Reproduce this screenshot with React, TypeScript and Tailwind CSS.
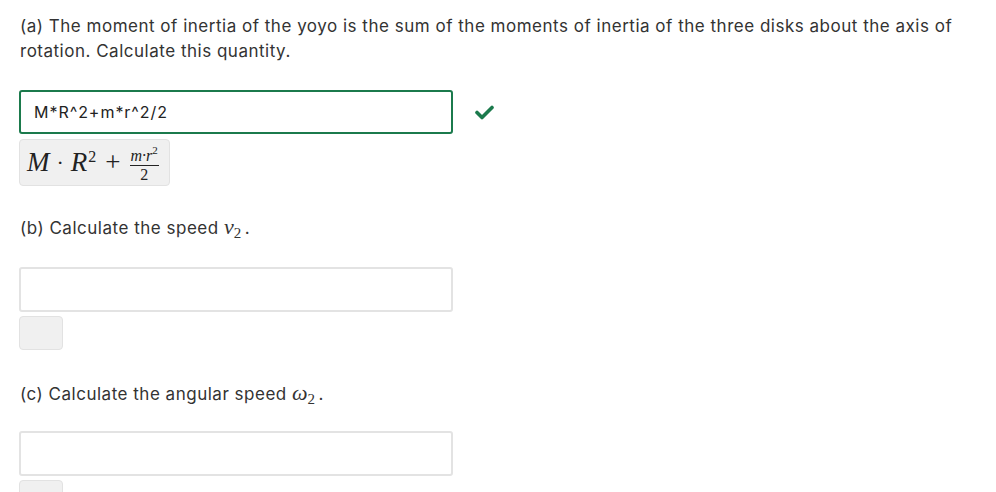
import React from 'react';

const serif = "font-['Liberation_Serif','DejaVu_Serif',serif]";

const AnswerBox = ({ value, correct }: { value?: string; correct?: boolean }) => (
  <div className="flex items-center">
    <div
      className={
        correct
          ? 'w-[434px] h-[44px] rounded-[3px] border-2 border-[#1b7a4c] flex items-center px-[13px] text-[16px] tracking-[0.06em] text-[#222]'
          : 'w-[434px] h-[45px] rounded-[3px] border-2 border-[#e3e3e3] flex items-center px-[13px] text-[16px] text-[#222]'
      }
    >
      {value}
    </div>
    {correct && (
      <svg className="ml-[22px]" width="19" height="15" viewBox="0 0 19 15">
        <path d="M2 7.5 L7 12.5 L17 2.5" fill="none" stroke="#1b7a4c" strokeWidth="3.6" strokeLinecap="round" strokeLinejoin="round" />
      </svg>
    )}
  </div>
);

export default function App() {
  return (
    <div className="font-['Inter',sans-serif] text-[#333] pl-[19px] pr-[20px] pt-[14px] w-[996px] h-[492px] overflow-hidden bg-white">
      <p className="text-[17px] leading-[25px] tracking-[0.03em] pl-[1px]">
        (a) The moment of inertia of the yoyo is the sum of the moments of inertia of the three disks about the axis of
        rotation. Calculate this quantity.
      </p>

      <div className="mt-[26px]">
        <AnswerBox value="M*R^2+m*r^2/2" correct />
        <div className="mt-[5px] w-[151px] h-[47px] rounded-[4px] border border-[#e2e2e2] bg-[#f0f0f0] flex items-center pl-[7px] text-[#222] leading-none">
          <span className={`${serif} text-[27px] italic`}>M</span>
          <span className={`${serif} text-[22px] mx-[7px]`}>·</span>
          <span className={`${serif} text-[27px] italic`}>R</span>
          <span className={`${serif} text-[16px] self-start mt-[9px] ml-[1px]`}>2</span>
          <span className={`${serif} text-[27px] mx-[9px]`}>+</span>
          <span className="inline-flex flex-col items-center leading-none mt-[5px]">
            <span className={`${serif} text-[16px] italic px-[1px] flex items-start`}>
              m·r<span className="text-[11px] not-italic -mt-[3px]">2</span>
            </span>
            <span className="w-full h-[1px] bg-[#222] my-[1px]" />
            <span className={`${serif} text-[16px]`}>2</span>
          </span>
        </div>
      </div>

      <p className="mt-[30px] text-[17px] leading-[25px] tracking-[0.03em] pl-[1px]">
        (b) Calculate the speed <span className={`${serif} italic text-[22px] leading-none tracking-normal`}>v</span>
        <sub className={`${serif} text-[15px] leading-none`}>2</sub>
        <span className="ml-[3px]">.</span>
      </p>

      <div className="mt-[26px]">
        <AnswerBox />
        <div className="mt-[4px] w-[44px] h-[34px] rounded-[4px] border border-[#e2e2e2] bg-[#f0f0f0]" />
      </div>

      <p className="mt-[32px] text-[17px] leading-[25px] tracking-[0.03em] pl-[1px]">
        (c) Calculate the angular speed <span className={`${serif} italic text-[22px] leading-none tracking-normal`}>ω</span>
        <sub className={`${serif} text-[15px] leading-none`}>2</sub>
        <span className="ml-[3px]">.</span>
      </p>

      <div className="mt-[24px]">
        <AnswerBox />
        <div className="mt-[4px] w-[44px] h-[34px] rounded-[4px] border border-[#e2e2e2] bg-[#f0f0f0]" />
      </div>
    </div>
  );
}
